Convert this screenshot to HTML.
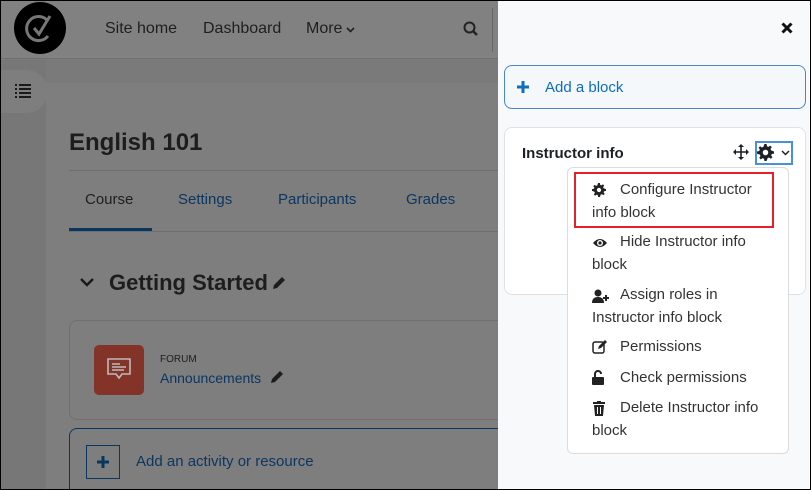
<!DOCTYPE html>
<html><head><meta charset="utf-8"><style>
*{margin:0;padding:0;box-sizing:border-box}
html,body{width:811px;height:490px;overflow:hidden}
body{font-family:"Liberation Sans",Roboto,sans-serif;position:relative;background:#7a7a7a}
.abs{position:absolute}
.t{position:absolute;white-space:nowrap}
.ic{position:absolute;left:-28px;top:4px}
</style></head><body>
<!-- header -->
<div class="abs" style="left:0;top:0;width:498px;height:59px;background:#818181;border-bottom:1px solid #707070"></div>
<div class="abs" style="left:14px;top:2px;width:52px;height:52px;border-radius:50%;background:#000"></div>
<svg class="abs" style="left:14px;top:2px" width="52" height="52" viewBox="0 0 52 52"><path d="M33 18 A12 12 0 1 0 34 34" fill="none" stroke="#777" stroke-width="3"/><path d="M20 26 L25 32 L36 14" fill="none" stroke="#777" stroke-width="3"/></svg>
<div class="t" style="left:105px;top:20px;font-size:16px;color:#1f1f1f">Site home</div>
<div class="t" style="left:203px;top:20px;font-size:16px;color:#1f1f1f">Dashboard</div>
<div class="t" style="left:306px;top:20px;font-size:16px;color:#1f1f1f">More</div>
<svg class="abs" style="left:346px;top:27px" width="9" height="6"><path d="M1 1 L4.5 4.5 L8 1" fill="none" stroke="#1f1f1f" stroke-width="1.6"/></svg>
<svg class="abs" style="left:463px;top:21px" width="16" height="16"><circle cx="6.5" cy="6.5" r="5" fill="none" stroke="#222" stroke-width="2"/><path d="M10 10 L14 14" stroke="#222" stroke-width="2.5"/></svg>
<div class="abs" style="left:492px;top:8px;width:1px;height:44px;background:#666"></div>
<!-- left strip -->
<div class="abs" style="left:0;top:60px;width:46px;height:430px;background:#777"></div>
<div class="abs" style="left:0;top:70px;width:48px;height:43px;border-radius:0 22px 22px 0;background:#7e7e7e"></div>
<svg class="abs" style="left:15px;top:84px" width="16" height="14"><g fill="#1a1a1a"><rect x="0" y="0" width="2" height="2"/><rect x="4" y="0" width="12" height="2"/><rect x="0" y="4" width="2" height="2"/><rect x="4" y="4" width="12" height="2"/><rect x="0" y="8" width="2" height="2"/><rect x="4" y="8" width="12" height="2"/><rect x="0" y="12" width="2" height="2"/><rect x="4" y="12" width="12" height="2"/></g></svg>
<!-- main card -->
<div class="abs" style="left:46px;top:83px;width:452px;height:407px;background:#7e7e7e"></div>
<div class="t" style="left:69px;top:129px;font-size:24px;font-weight:bold;color:#1d1d1d">English 101</div>
<div class="abs" style="left:69px;top:170px;width:429px;height:1px;background:#6e6e6e"></div>
<div class="t" style="left:85px;top:191px;font-size:15px;color:#1f1f1f">Course</div>
<div class="t" style="left:178px;top:191px;font-size:15px;color:#0b3760">Settings</div>
<div class="t" style="left:278px;top:191px;font-size:15px;color:#0b3760">Participants</div>
<div class="t" style="left:406px;top:191px;font-size:15px;color:#0b3760">Grades</div>
<div class="abs" style="left:69px;top:228px;width:83px;height:3px;background:#08365f"></div>
<div class="abs" style="left:69px;top:231px;width:429px;height:1px;background:#6e6e6e"></div>
<svg class="abs" style="left:80px;top:277px" width="14" height="10"><path d="M1 2 L7 8 L13 2" fill="none" stroke="#1a1a1a" stroke-width="2.5"/></svg>
<div class="t" style="left:109px;top:270px;font-size:22px;font-weight:bold;color:#1d1d1d">Getting Started</div>
<svg class="abs" style="left:272px;top:276px" width="14" height="14"><path d="M1 13 L2 9 L10 1 L13 4 L5 12 Z" fill="#1d1d1d"/></svg>
<div class="abs" style="left:69px;top:320px;width:440px;height:100px;border:1px solid #707070;border-radius:8px"></div>
<div class="abs" style="left:94px;top:345px;width:50px;height:50px;background:#843328;border-radius:5px"></div>
<svg class="abs" style="left:106px;top:358px" width="26" height="24"><path d="M2 1 H24 V16 H16 L13 20 L10 16 H2 Z" fill="none" stroke="#bbb" stroke-width="1.6"/><path d="M6 6 H14 M6 9 H20 M6 12 H18" stroke="#bbb" stroke-width="1.4"/></svg>
<div class="t" style="left:160px;top:354px;font-size:10px;color:#1d1d1d">FORUM</div>
<div class="t" style="left:160px;top:370px;font-size:14px;color:#0b3760">Announcements</div>
<svg class="abs" style="left:270px;top:370px" width="14" height="14"><path d="M1 13 L2 9 L10 1 L13 4 L5 12 Z" fill="#1d1d1d"/></svg>
<div class="abs" style="left:69px;top:428px;width:440px;height:70px;border:1px solid #08365f;border-radius:8px"></div>
<div class="abs" style="left:86px;top:445px;width:34px;height:34px;border:1px solid #08365f"></div>
<svg class="abs" style="left:95px;top:454px" width="16" height="16"><path d="M8 2 V14 M2 8 H14" stroke="#08365f" stroke-width="3"/></svg>
<div class="t" style="left:136px;top:453px;font-size:15px;color:#0b3760">Add an activity or resource</div>
<!-- drawer -->
<div class="abs" style="left:498px;top:0;width:313px;height:490px;background:#f8f9fa"></div>
<svg class="abs" style="left:781px;top:22px" width="12" height="12"><path d="M1.5 1.5 L10.5 10.5 M10.5 1.5 L1.5 10.5" stroke="#111" stroke-width="3"/></svg>
<div class="abs" style="left:504px;top:65px;width:302px;height:44px;border:1px solid #4a87c9;border-radius:8px;background:#f5f8fb"></div>
<svg class="abs" style="left:516px;top:80px" width="14" height="14"><path d="M7 1 V13 M1 7 H13" stroke="#0f6cbf" stroke-width="3"/></svg>
<div class="t" style="left:545px;top:79px;font-size:15px;color:#0f6cbf">Add a block</div>
<div class="abs" style="left:504px;top:127px;width:302px;height:168px;border:1px solid #dee2e6;border-radius:8px;background:#fff"></div>
<div class="t" style="left:522px;top:145px;font-size:15px;font-weight:bold;color:#1d2125">Instructor info</div>
<svg class="abs" style="left:733px;top:144px" width="16" height="16"><path d="M8 1 V15 M1 8 H15" stroke="#1d2125" stroke-width="1.6"/><path d="M8 0 L5 3 H11Z M8 16 L5 13 H11Z M0 8 L3 5 V11Z M16 8 L13 5 V11Z" fill="#1d2125"/></svg>
<div class="abs" style="left:755px;top:141px;width:38px;height:24px;border:2px solid #4a90d9"></div>
<svg class="abs" style="left:757px;top:144px" width="17" height="17" viewBox="0 0 16 16"><path fill="#1d2125" d="M7 0h2l.4 2.1 1.3.6 1.8-1.2 1.4 1.4-1.2 1.8.6 1.3L16 7v2l-2.1.4-.6 1.3 1.2 1.8-1.4 1.4-1.8-1.2-1.3.6L9 16H7l-.4-2.1-1.3-.6-1.8 1.2-1.4-1.4 1.2-1.8-.6-1.3L0 9V7l2.1-.4.6-1.3-1.2-1.8 1.4-1.4 1.8 1.2 1.3-.6z"/><circle cx="8" cy="8" r="2.6" fill="#fff"/></svg>
<svg class="abs" style="left:781px;top:150px" width="9" height="6"><path d="M1 1 L4.5 4.5 L8 1" fill="none" stroke="#1d2125" stroke-width="1.5"/></svg>
<div class="abs" style="left:567px;top:167px;width:222px;height:287px;border:1px solid #dcdcdc;border-radius:6px;background:#fff"></div>
<div class="abs" style="left:574px;top:172px;width:200px;height:56px;border:2px solid #e5202a"></div>
<div style="position:absolute;left:592px;top:179px;width:180px;font-size:15px;line-height:22.5px;color:#333">
<div style="height:52px;position:relative;text-indent:28px"><svg class="ic" style="left:0" width="14" height="14" viewBox="0 0 16 16"><path fill="#222" d="M7 0h2l.4 2.1 1.3.6 1.8-1.2 1.4 1.4-1.2 1.8.6 1.3L16 7v2l-2.1.4-.6 1.3 1.2 1.8-1.4 1.4-1.8-1.2-1.3.6L9 16H7l-.4-2.1-1.3-.6-1.8 1.2-1.4-1.4 1.2-1.8-.6-1.3L0 9V7l2.1-.4.6-1.3-1.2-1.8 1.4-1.4 1.8 1.2 1.3-.6z"/><circle cx="8" cy="8" r="2.4" fill="#fff"/></svg>Configure Instructor info block</div>
<div style="height:53px;position:relative;text-indent:28px"><svg class="ic" style="left:0;top:6px" width="16" height="12"><path d="M1 6 Q8 -2 15 6 Q8 14 1 6Z" fill="#222"/><circle cx="8" cy="6" r="3" fill="#fff"/><circle cx="8" cy="6" r="1.6" fill="#222"/></svg>Hide Instructor info block</div>
<div style="height:52px;position:relative;text-indent:28px"><svg class="ic" style="left:0;top:5px" width="18" height="14"><circle cx="6" cy="4" r="3.5" fill="#222"/><path d="M0 14 Q0 8 6 8 Q12 8 12 14Z" fill="#222"/><path d="M14 6 V12 M11 9 H17" stroke="#222" stroke-width="2"/></svg>Assign roles in Instructor info block</div>
<div style="height:31px;position:relative;text-indent:28px"><svg class="ic" style="left:0" width="16" height="14"><rect x="1" y="2" width="11" height="11" rx="2" fill="none" stroke="#222" stroke-width="1.5"/><path d="M6 9 L7 6 L13 0 L15 2 L9 8Z" fill="#222"/></svg>Permissions</div>
<div style="height:30px;position:relative;text-indent:28px"><svg class="ic" style="left:0;top:3px" width="12" height="15"><path d="M3 7 V4 A3 3 0 0 1 9 4" fill="none" stroke="#222" stroke-width="2"/><rect x="0" y="7" width="12" height="8" rx="1" fill="#222"/></svg>Check permissions</div>
<div style="position:relative;text-indent:28px"><svg class="ic" style="left:1px" width="12" height="15"><rect x="0" y="1" width="12" height="2" fill="#222"/><rect x="4" y="0" width="4" height="2" fill="#222"/><path d="M1 4 H11 L10 15 H2Z" fill="#222"/><path d="M4.5 6 V13 M7.5 6 V13" stroke="#fff" stroke-width="1"/></svg>Delete Instructor info block</div>
</div>
<div class="abs" style="left:0;top:0;width:811px;height:490px;border:1px solid #000;pointer-events:none"></div>
</body></html>
